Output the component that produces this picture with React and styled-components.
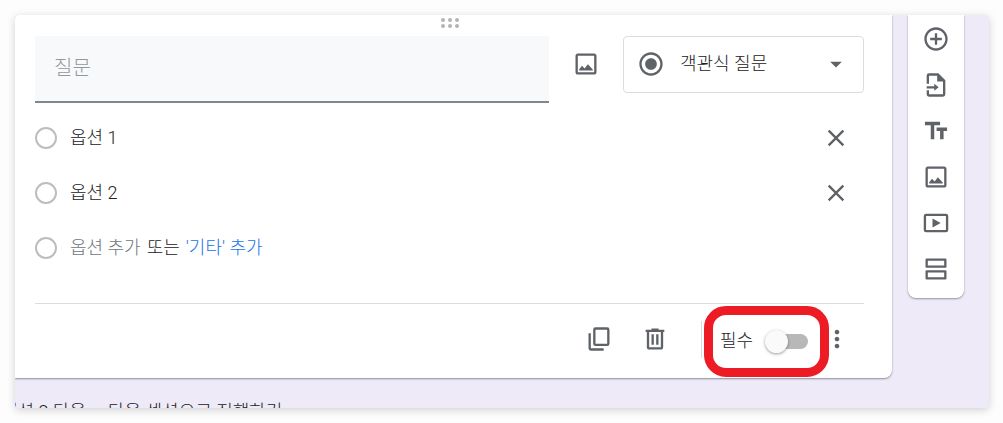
import React from "react";
import styled, { createGlobalStyle } from "styled-components";

const GlobalStyle = createGlobalStyle`
  * { box-sizing: border-box; }
  body {
    margin: 0;
    background: #fdfdfd;
    color: #202124;
    font-family: Roboto, "Noto Sans CJK KR", sans-serif;
    font-size: 18px;
    font-weight: 300;
  }
  button, input, select {
    font: inherit;
    color: inherit;
    margin: 0;
  }
`;

const Frame = styled.main`
  display: flex;
  align-items: flex-start;
  gap: 16px;
  margin: 15px 14px 15px 15px;
  padding-right: 25px;
  overflow: hidden;
  border-radius: 4px;
  background: #eeeaf8;
  box-shadow: 0 2px 8px rgba(0, 0, 0, 0.18);
`;

const Page = styled.div`
  display: flow-root;
`;

const Column = styled.div`
  flex: 1;
  min-width: 0;
`;

const Card = styled.section`
  padding: 0 28px 0 20px;
  background: #fff;
  border-radius: 0 0 8px 0;
  box-shadow: 0 1px 2px rgba(60, 64, 67, 0.55);
`;

const Handle = styled.div`
  display: flex;
  justify-content: center;
  height: 21px;
  padding-top: 2px;
  color: #b4b4b4;
`;

const QuestionRow = styled.div`
  display: flex;
  align-items: flex-start;
`;

const QuestionInput = styled.input`
  flex: 1;
  min-width: 0;
  height: 67px;
  padding: 0 19px 2px;
  border: 0;
  border-bottom: 2px solid #80868b;
  border-radius: 0;
  outline: 0;
  background: #f8f9fb;
  font-size: 20px;
  &::placeholder { color: #94989c; opacity: 1; }
`;

const IconButton = styled.button`
  display: flex;
  align-items: center;
  justify-content: center;
  flex: none;
  width: 28px;
  height: ${(p) => p.$height || 28}px;
  padding: 0;
  border: 0;
  background: none;
  color: #5f6368;
`;

const ImageSlot = styled.div`
  display: flex;
  justify-content: center;
  width: 74px;
`;

const TypePicker = styled.div`
  position: relative;
  width: 241px;
  color: #5f6368;
  svg {
    position: absolute;
    top: 14px;
    pointer-events: none;
  }
  svg:first-of-type { left: 14px; }
  svg:last-of-type { right: 14px; }
`;

const TypeSelect = styled.select`
  appearance: none;
  display: block;
  width: 100%;
  height: 57px;
  padding: 0 48px 2px 56px;
  border: 1px solid #dadce0;
  border-radius: 4px;
  background: #fff;
  color: #202124;
`;

const Options = styled.ul`
  list-style: none;
  margin: 7px 0 28px;
  padding: 0;
`;

const OptionRow = styled.li`
  display: flex;
  align-items: center;
  height: 55px;
  padding-right: 14px;
`;

const OptionLabel = styled.label`
  flex: 1;
  display: flex;
  align-items: center;
  gap: 13px;
`;

const OptionText = styled.span`
  padding-bottom: 4px;
`;

const Radio = styled.input`
  appearance: none;
  flex: none;
  width: 22px;
  height: 22px;
  border: 2px solid #bdbdbd;
  border-radius: 50%;
`;

const AddLine = styled.div`
  display: flex;
  gap: 6px;
  margin-left: 13px;
  padding-bottom: 4px;
`;

const TextButton = styled.button`
  padding: 0;
  border: 0;
  background: none;
  color: ${(p) => (p.$accent ? "#1a73e8" : "#70757a")};
`;

const Actions = styled.footer`
  display: flex;
  align-items: center;
  justify-content: flex-end;
  height: 75px;
  padding: 0 13px 4px 0;
  border-top: 1px solid #dadce0;
`;

const ActionIcons = styled.div`
  display: flex;
  gap: 28px;
  padding-right: 32px;
`;

const Required = styled.label`
  position: relative;
  display: flex;
  align-items: center;
  gap: 12px;
  margin-right: 15px;
`;

const Separator = styled.span`
  width: 1px;
  height: 37px;
  margin-right: 18px;
  background: #dadce0;
`;

const Highlight = styled.span`
  position: absolute;
  inset: -20px -21px -24px -16px;
  border: 9px solid #ed1c24;
  border-radius: 22px;
  pointer-events: none;
`;

const Switch = styled.input`
  appearance: none;
  display: flex;
  align-items: center;
  width: 43px;
  height: 27px;
  padding-top: 4px;
  &::before {
    content: "";
    z-index: 1;
    flex: none;
    width: 23px;
    height: 23px;
    border-radius: 50%;
    background: #fafafa;
    box-shadow: 0 1px 3px rgba(0, 0, 0, 0.4);
  }
  &::after {
    content: "";
    flex: none;
    width: 40px;
    height: 15px;
    margin-left: -20px;
    border-radius: 8px;
    background: #b8b8b8;
  }
`;

const NextSection = styled.div`
  display: flex;
  gap: 22px;
  height: 30px;
  padding-top: 21px;
  margin-left: -14px;
  overflow: hidden;
  line-height: 26px;
  white-space: nowrap;
`;

const Toolbar = styled.nav`
  display: flex;
  flex-direction: column;
  align-items: center;
  flex: none;
  width: 56px;
  padding: 1px 0 6px;
  background: #fff;
  border-radius: 0 0 8px 8px;
  box-shadow: 0 1px 2px rgba(60, 64, 67, 0.5);
`;

const paths = {
  image: "M19 5v14H5V5h14m0-2H5c-1.1 0-2 .9-2 2v14c0 1.1.9 2 2 2h14c1.1 0 2-.9 2-2V5c0-1.1-.9-2-2-2zM6.2 17.6v-1l2.4-3 2.2 2.2 2.8-3.6 4.2 4.5v.9z",
  radio: "M12 7c-2.8 0-5 2.2-5 5s2.2 5 5 5 5-2.2 5-5-2.2-5-5-5zm0-5C6.5 2 2 6.5 2 12s4.5 10 10 10 10-4.5 10-10S17.5 2 12 2zm0 18c-4.4 0-8-3.6-8-8s3.6-8 8-8 8 3.6 8 8-3.6 8-8 8z",
  caret: "M7 10l5 5 5-5z",
  close: "M19 6.4L17.6 5 12 10.6 6.4 5 5 6.4l5.6 5.6L5 17.6 6.4 19l5.6-5.6 5.6 5.6 1.4-1.4-5.6-5.6z",
  copy: "M19 2H9a2 2 0 0 0-2 2v12a2 2 0 0 0 2 2h10a2 2 0 0 0 2-2V4a2 2 0 0 0-2-2zm0 14H9V4h10v12zM3 7v13a2 2 0 0 0 2 2h11v-2H5V7z",
  trash: "M15 4V3H9v1H4v2h1v13c0 1.1.9 2 2 2h10c1.1 0 2-.9 2-2V6h1V4h-5zm2 15H7V6h10v13zM9 8h2v9H9zM13 8h2v9h-2z",
  more: "M12 8c1.1 0 2-.9 2-2s-.9-2-2-2-2 .9-2 2 .9 2 2 2zm0 2c-1.1 0-2 .9-2 2s.9 2 2 2 2-.9 2-2-.9-2-2-2zm0 6c-1.1 0-2 .9-2 2s.9 2 2 2 2-.9 2-2-.9-2-2-2z",
  add: "M13 7h-2v4H7v2h4v4h2v-4h4v-2h-4V7zm-1-5C6.5 2 2 6.5 2 12s4.5 10 10 10 10-4.5 10-10S17.5 2 12 2zm0 18c-4.4 0-8-3.6-8-8s3.6-8 8-8 8 3.6 8 8-3.6 8-8 8z",
  importDoc: "M4 11V4a2 2 0 0 1 2-2h8l6 6v12a2 2 0 0 1-2 2H6a2 2 0 0 1-2-2v-3.5h2V20h12V9h-5V4H6v7zM4 13h6.5v-2l3.8 3-3.8 3v-2H4z",
  title: "M2.5 4v3h5v12h3V7h5V4h-13zm19 5h-9v3h3v7h3v-7h3V9z",
  video: "M20.5 4h-17a2 2 0 0 0-2 2v12a2 2 0 0 0 2 2h17a2 2 0 0 0 2-2V6a2 2 0 0 0-2-2zm0 14h-17V6h17v12zM9 8.2v7.6l7-3.8z",
  section: "M19 5v4H5V5h14m1-2H4a1 1 0 0 0-1 1v6a1 1 0 0 0 1 1h16a1 1 0 0 0 1-1V4a1 1 0 0 0-1-1zM19 15v4H5v-4h14m1-2H4a1 1 0 0 0-1 1v6a1 1 0 0 0 1 1h16a1 1 0 0 0 1-1v-6a1 1 0 0 0-1-1z",
};

const Icon = ({ name }) => (
  <svg width="28" height="28" viewBox="0 0 24 24" fill="currentColor" aria-hidden="true">
    <path d={paths[name]} />
  </svg>
);

const tools = [
  ["add", "질문 추가"],
  ["importDoc", "질문 가져오기"],
  ["title", "제목 및 설명 추가"],
  ["image", "이미지 추가"],
  ["video", "동영상 추가"],
  ["section", "섹션 추가"],
];

export default function App() {
  return (
    <Page>
      <GlobalStyle />
      <Frame>
        <Column>
          <Card>
            <Handle>
              <svg width="20" height="12" viewBox="0 0 20 12" fill="currentColor" aria-hidden="true">
                {[3, 10, 17].map((x) => (
                  <g key={x}>
                    <circle cx={x} cy="3" r="2" />
                    <circle cx={x} cy="9" r="2" />
                  </g>
                ))}
              </svg>
            </Handle>
            <QuestionRow>
              <QuestionInput placeholder="질문" aria-label="질문" />
              <ImageSlot>
                <IconButton $height={56} aria-label="이미지 추가">
                  <Icon name="image" />
                </IconButton>
              </ImageSlot>
              <TypePicker>
                <TypeSelect aria-label="질문 유형">
                  <option>객관식 질문</option>
                </TypeSelect>
                <Icon name="radio" />
                <Icon name="caret" />
              </TypePicker>
            </QuestionRow>
            <Options>
              {["옵션 1", "옵션 2"].map((text) => (
                <OptionRow key={text}>
                  <OptionLabel>
                    <Radio type="radio" name="option" />
                    <OptionText>{text}</OptionText>
                  </OptionLabel>
                  <IconButton aria-label={`${text} 삭제`}>
                    <Icon name="close" />
                  </IconButton>
                </OptionRow>
              ))}
              <OptionRow>
                <Radio type="radio" name="option" aria-label="옵션 추가" />
                <AddLine>
                  <TextButton>옵션 추가</TextButton>
                  <span>또는</span>
                  <TextButton $accent>'기타' 추가</TextButton>
                </AddLine>
              </OptionRow>
            </Options>
            <Actions>
              <ActionIcons>
                <IconButton aria-label="복사"><Icon name="copy" /></IconButton>
                <IconButton aria-label="삭제"><Icon name="trash" /></IconButton>
              </ActionIcons>
              <Separator />
              <Required>
                필수
                <Switch type="checkbox" role="switch" />
                <Highlight />
              </Required>
              <IconButton aria-label="옵션 더보기"><Icon name="more" /></IconButton>
            </Actions>
          </Card>
          <NextSection>
            <span>섹션 2 다음</span>
            <span>다음 섹션으로 진행하기</span>
          </NextSection>
        </Column>
        <Toolbar aria-label="도구">
          {tools.map(([name, label]) => (
            <IconButton key={name} $height={46} aria-label={label}>
              <Icon name={name} />
            </IconButton>
          ))}
        </Toolbar>
      </Frame>
    </Page>
  );
}
